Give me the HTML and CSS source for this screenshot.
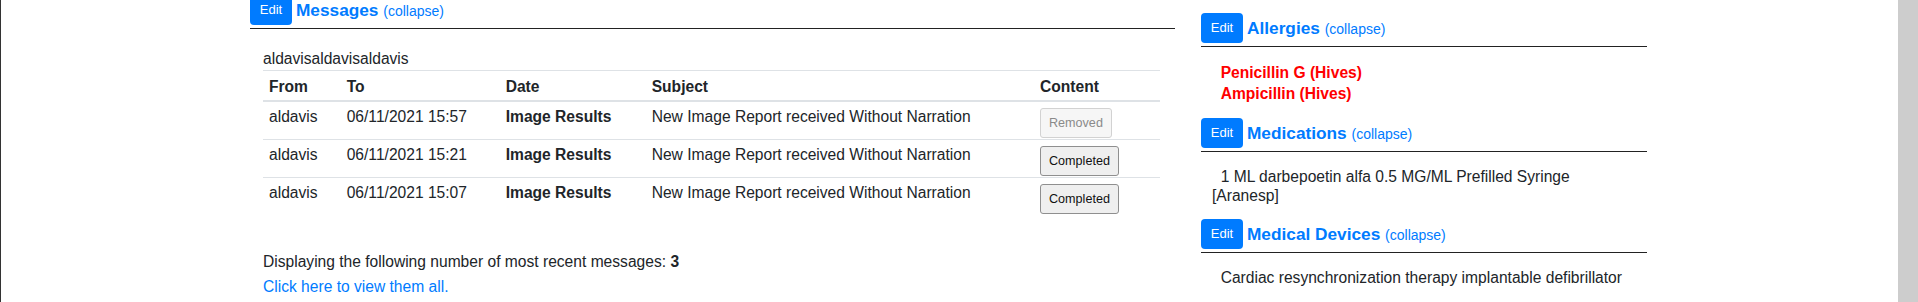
FILE: index.html
```html
<!DOCTYPE html>
<html lang="en">
<head>
<meta charset="utf-8">
<title>Patient summary</title>
<link rel="stylesheet" href="styles.css">
</head>
<body>
<div class="page">
  <div class="layout">
    <main class="col-main">
      <section class="panel">
        <div class="panel-head">
          <button class="btn-edit" type="button">Edit</button>
          <h2 class="panel-title"><a href="#">Messages</a> <small><a href="#">(collapse)</a></small></h2>
        </div>
        <div class="messages-body">
          <div class="msg-owner">aldavisaldavisaldavis</div>
          <table class="msg-table">
            <colgroup>
              <col class="c-from"><col class="c-to"><col class="c-date"><col class="c-subject"><col class="c-content">
            </colgroup>
            <thead>
              <tr><th>From</th><th>To</th><th>Date</th><th>Subject</th><th>Content</th></tr>
            </thead>
            <tbody>
              <tr>
                <td>aldavis</td><td>06/11/2021 15:57</td><td class="strong">Image Results</td>
                <td>New Image Report received Without Narration</td>
                <td><button class="btn-status removed" type="button">Removed</button></td>
              </tr>
              <tr>
                <td>aldavis</td><td>06/11/2021 15:21</td><td class="strong">Image Results</td>
                <td>New Image Report received Without Narration</td>
                <td><button class="btn-status" type="button">Completed</button></td>
              </tr>
              <tr>
                <td>aldavis</td><td>06/11/2021 15:07</td><td class="strong">Image Results</td>
                <td>New Image Report received Without Narration</td>
                <td><button class="btn-status" type="button">Completed</button></td>
              </tr>
            </tbody>
          </table>
          <div class="msg-count">Displaying the following number of most recent messages: <b>3</b></div>
          <div class="msg-all"><a href="#">Click here to view them all.</a></div>
        </div>
      </section>
    </main>
    <aside class="col-side">
      <section class="panel">
        <div class="panel-head">
          <button class="btn-edit" type="button">Edit</button>
          <h2 class="panel-title"><a href="#">Allergies</a> <small><a href="#">(collapse)</a></small></h2>
        </div>
        <div class="side-body allergies">
          <div>&nbsp;&nbsp;Penicillin G (Hives)</div>
          <div>&nbsp;&nbsp;Ampicillin (Hives)</div>
        </div>
      </section>
      <section class="panel">
        <div class="panel-head">
          <button class="btn-edit" type="button">Edit</button>
          <h2 class="panel-title"><a href="#">Medications</a> <small><a href="#">(collapse)</a></small></h2>
        </div>
        <div class="side-body">
          <div>&nbsp;&nbsp;1 ML darbepoetin alfa 0.5 MG/ML Prefilled Syringe [Aranesp]</div>
        </div>
      </section>
      <section class="panel">
        <div class="panel-head">
          <button class="btn-edit" type="button">Edit</button>
          <h2 class="panel-title"><a href="#">Medical Devices</a> <small><a href="#">(collapse)</a></small></h2>
        </div>
        <div class="side-body">
          <div>&nbsp;&nbsp;Cardiac resynchronization therapy implantable defibrillator</div>
        </div>
      </section>
    </aside>
  </div>
  <div class="scrollbar"></div>
</div>
</body>
</html>
```

FILE: styles.css
```css
html, body {
  margin: 0;
  padding: 0;
  height: 100%;
  overflow: hidden;
  background: #ffffff;
}

body {
  font-family: "Liberation Sans", Arial, sans-serif;
  font-size: 15.6px;
  color: #212529;
}

a {
  color: #007bff;
  text-decoration: none;
}

.page {
  display: flex;
  height: 302px;
  border-left: 1px solid #333333;
  box-sizing: border-box;
}

.layout {
  flex: 1;
  display: flex;
  align-items: flex-start;
  padding-left: 249px;
  gap: 26px;
}

.col-main {
  width: 925px;
  margin-top: -5px;
}

.col-side {
  width: 446px;
  margin-top: 13px;
}

.scrollbar {
  width: 20px;
  background: #cdcdcd;
}

/* panel header */
.panel-head {
  display: flex;
  align-items: flex-end;
  gap: 4px;
  padding-bottom: 3px;
  border-bottom: 1px solid #222222;
}

.btn-edit {
  height: 30px;
  padding: 0 9.8px;
  border: 0;
  border-radius: 4px;
  background: #007bff;
  color: #ffffff;
  font-family: "Liberation Sans", Arial, sans-serif;
  font-size: 13px;
  line-height: 30px;
}

.panel-title {
  margin: 0;
  font-size: 17.25px;
  font-weight: bold;
  line-height: 30px;
}

.panel-title small {
  font-size: 14px;
  font-weight: normal;
  line-height: 1;
}

/* messages */
.messages-body {
  padding-left: 13px;
}

.msg-owner {
  margin-top: 18px;
  line-height: 23.4px;
}

.msg-table {
  width: 897px;
  table-layout: fixed;
  border-collapse: collapse;
}

.c-from { width: 77.7px; }
.c-to { width: 159px; }
.c-date { width: 146px; }
.c-subject { width: 388.3px; }
.c-content { width: 126px; }

.msg-table th {
  text-align: left;
  font-weight: bold;
  padding: 6px 6px 4px;
  line-height: 19px;
  border-top: 1px solid #dee2e6;
  border-bottom: 2px solid #dee2e6;
}

.msg-table td {
  padding: 3px 6px 1px;
  line-height: 23.4px;
  vertical-align: top;
  border-top: 1px solid #dee2e6;
  white-space: nowrap;
}

.msg-table td.strong {
  font-weight: bold;
}

.btn-status {
  display: inline-block;
  vertical-align: top;
  margin-top: 3px;
  height: 30px;
  padding: 0 8px;
  border: 1px solid #8f8f8f;
  border-radius: 3px;
  background: #efefef;
  color: #111111;
  font-family: "Liberation Sans", Arial, sans-serif;
  font-size: 12.6px;
}

.btn-status.removed {
  color: #8a8a8a;
  border-color: #d2d2d2;
  background: #f6f6f6;
}

.msg-count {
  margin-top: 35px;
  line-height: 24.4px;
}

.msg-all {
  line-height: 24.4px;
}

/* side column */
.side-body {
  margin: 15px 0 13px;
  padding: 0 15px 0 11px;
  line-height: 19.5px;
}

.side-body.allergies {
  color: #ff0000;
  font-weight: bold;
  line-height: 21.3px;
}
```
